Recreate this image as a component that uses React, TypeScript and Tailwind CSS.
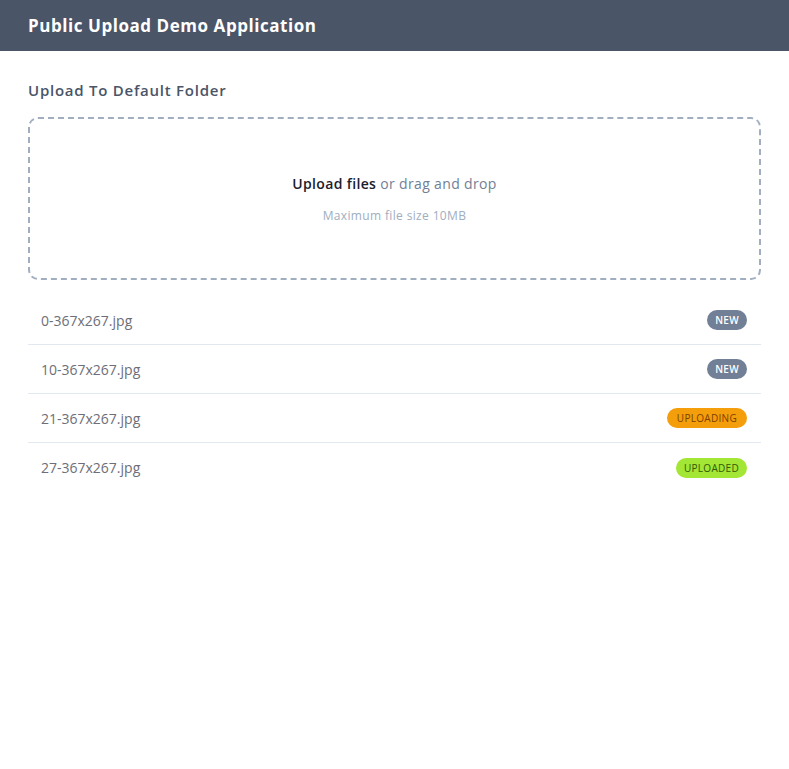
import React from "react";

const files = [
  { name: "0-367x267.jpg", status: "NEW" },
  { name: "10-367x267.jpg", status: "NEW" },
  { name: "21-367x267.jpg", status: "UPLOADING" },
  { name: "27-367x267.jpg", status: "UPLOADED" },
];

function Badge({ status }: { status: string }) {
  if (status === "NEW")
    return (
      <span className="rounded-full bg-[#718096] px-[8px] py-[3px] text-[10px] font-semibold leading-[14px] tracking-[0.3px] text-white">
        NEW
      </span>
    );
  if (status === "UPLOADING")
    return (
      <span className="rounded-full bg-[#f59e0b] px-[10px] py-[3px] text-[10px] leading-[14px] tracking-[0.3px] text-[#7c3f00]">
        UPLOADING
      </span>
    );
  return (
    <span className="rounded-full bg-[#a3e635] px-[8px] py-[3px] text-[10px] leading-[14px] tracking-[0.3px] text-[#2f5a06]">
      UPLOADED
    </span>
  );
}

export default function App() {
  return (
    <div className="min-h-screen bg-white font-['Open_Sans',sans-serif]">
      <header className="flex h-[51px] items-center bg-[#4a5568] px-[28px]">
        <h1 className="text-[17px] font-bold tracking-[0.55px] text-white">Public Upload Demo Application</h1>
      </header>
      <main className="px-[28px] pt-[29px]">
        <h2 className="text-[15px] font-semibold leading-[20px] tracking-[0.75px] text-[#4a5568]">
          Upload To Default Folder
        </h2>
        <div className="mt-[17px] flex h-[163px] flex-col items-center justify-center rounded-[10px] border-2 border-dashed border-[#a0aec0]">
          <p className="text-[14px] tracking-[0.35px] text-[#718096]">
            <span className="font-semibold text-[#1a202c]">Upload files</span> or drag and drop
          </p>
          <p className="mt-[13px] text-[12px] tracking-[0.35px] text-[#a0aec0]">Maximum file size 10MB</p>
        </div>
        <ul className="mt-[16px]">
          {files.map((f, i) => (
            <li
              key={f.name}
              className={`flex h-[49px] items-center justify-between pl-[13px] pr-[14px] ${
                i < files.length - 1 ? "border-b border-[#e2e8f0]" : ""
              }`}
            >
              <span className="text-[14px] tracking-[0px] text-[#6e6e78]">{f.name}</span>
              <Badge status={f.status} />
            </li>
          ))}
        </ul>
      </main>
    </div>
  );
}
